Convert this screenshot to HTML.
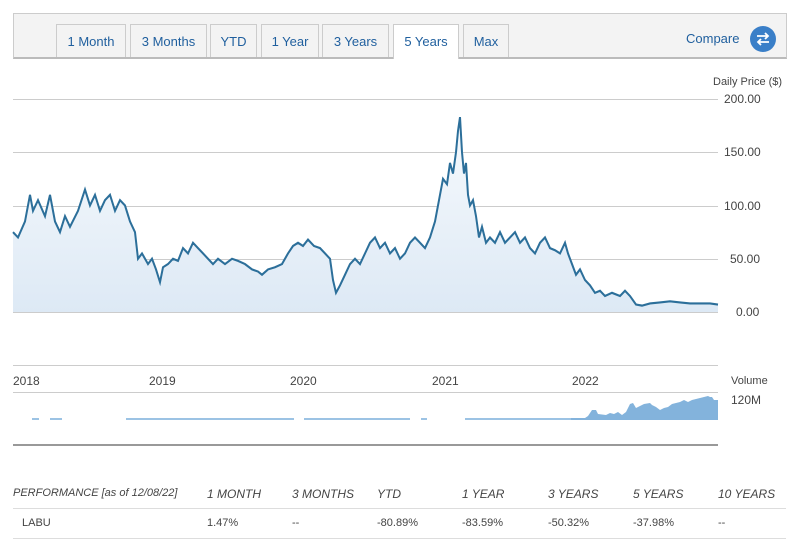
<!DOCTYPE html>
<html><head><style>
body{margin:0;width:800px;height:544px;background:#fff;font-family:"Liberation Sans",sans-serif;position:relative;overflow:hidden}
.bar{position:absolute;left:13px;top:13px;width:772px;height:43px;background:#f3f3f3;border:1px solid #ccc;border-bottom:2px solid #bbb}
.tab{position:absolute;top:24px;height:33px;border:1px solid #ccc;border-bottom:none;background:#f3f3f3;color:#1f5f9e;font-size:13px;line-height:34px;text-align:center;box-sizing:border-box}
.tab.on{background:#fff;height:35px;color:#1f5f9e}
.t{position:absolute;font-size:12px;color:#444}
.h{position:absolute;top:487px;font-size:12px;font-style:italic;color:#444}
.r{position:absolute;top:517px;font-size:11px;color:#444}
</style></head><body>
<div class="bar"></div>
<div class="tab" style="left:56px;width:70px">1 Month</div>
<div class="tab" style="left:130px;width:77px">3 Months</div>
<div class="tab" style="left:210px;width:47px">YTD</div>
<div class="tab" style="left:261px;width:58px">1 Year</div>
<div class="tab" style="left:322px;width:67px">3 Years</div>
<div class="tab on" style="left:393px;width:66px">5 Years</div>
<div class="tab" style="left:463px;width:46px">Max</div>
<div style="position:absolute;left:686px;top:31px;font-size:13px;color:#1f5f9e">Compare</div>
<svg style="position:absolute;left:750px;top:26px" width="26" height="26"><circle cx="13" cy="13" r="13" fill="#3a7fc8"/><path d="M7 10h11M15 7l3 3-3 3M19 16H8M11 13l-3 3 3 3" stroke="#fff" stroke-width="1.8" fill="none"/></svg>
<div class="t" style="left:713px;top:76px;font-size:11px">Daily Price ($)</div>
<div class="t" style="left:724px;top:92px">200.00</div>
<div class="t" style="left:724px;top:145px">150.00</div>
<div class="t" style="left:724px;top:199px">100.00</div>
<div class="t" style="left:730px;top:252px">50.00</div>
<div class="t" style="left:736px;top:305px">0.00</div>
<div class="t" style="left:13px;top:374px">2018</div>
<div class="t" style="left:149px;top:374px">2019</div>
<div class="t" style="left:290px;top:374px">2020</div>
<div class="t" style="left:432px;top:374px">2021</div>
<div class="t" style="left:572px;top:374px">2022</div>
<div class="t" style="left:731px;top:375px;font-size:11px">Volume</div>
<div class="t" style="left:731px;top:393px">120M</div>
<svg style="position:absolute;left:0;top:0" width="800" height="460">
<g stroke="#ccc" stroke-width="1">
<line x1="13" y1="99.5" x2="718" y2="99.5"/><line x1="13" y1="152.5" x2="718" y2="152.5"/><line x1="13" y1="206.5" x2="718" y2="206.5"/><line x1="13" y1="259.5" x2="718" y2="259.5"/><line x1="13" y1="312.5" x2="718" y2="312.5"/><line x1="13" y1="365.5" x2="718" y2="365.5"/><line x1="13" y1="392.5" x2="718" y2="392.5"/></g>
<line x1="13" y1="445" x2="718" y2="445" stroke="#999" stroke-width="2"/>
<defs><linearGradient id="g" x1="0" y1="1" x2="0" y2="0"><stop offset="0" stop-color="#f7fafd"/><stop offset="1" stop-color="#dde9f5"/></linearGradient></defs>
<g transform="translate(0,312) scale(1,-1.065)">
<path id="p" d="M13 75L18 70 25 85 30 110 33 95 38 105 45 90 50 110 55 85 60 75 65 90 70 80 78 95 85 115 90 100 95 110 100 95 105 105 110 110 115 95 120 105 125 100 130 85 135 75 138 50 142 55 148 45 152 50 156 40 160 28 163 42 168 45 173 50 178 48 183 60 188 55 193 65 198 60 203 55 208 50 213 45 218 50 225 45 232 50 238 48 245 45 252 40 258 38 262 35 268 40 275 42 282 45 288 55 293 62 298 65 303 62 308 68 314 62 320 60 325 55 330 50 333 30 336 18 340 25 345 35 350 45 355 50 360 45 365 55 370 65 375 70 380 60 385 65 390 55 395 60 400 50 405 55 410 65 415 70 420 65 425 60 430 70 435 85 440 110 443 125 447 120 450 140 453 130 456 150 458 170 460 183 462 150 464 130 466 140 468 110 470 100 473 105 476 90 479 70 482 80 486 65 490 70 495 65 500 75 505 65 510 70 515 75 520 65 525 70 530 60 535 55 540 65 545 70 550 60 555 58 560 55 565 65 568 55 572 45 576 35 580 40 585 30 590 25 595 18 600 20 605 15 612 18 620 15 625 20 630 15 636 7 642 6 650 8 660 9 670 10 680 9 690 8 700 8 710 8 718 7" fill="none"/>
<path d="M13 75L18 70 25 85 30 110 33 95 38 105 45 90 50 110 55 85 60 75 65 90 70 80 78 95 85 115 90 100 95 110 100 95 105 105 110 110 115 95 120 105 125 100 130 85 135 75 138 50 142 55 148 45 152 50 156 40 160 28 163 42 168 45 173 50 178 48 183 60 188 55 193 65 198 60 203 55 208 50 213 45 218 50 225 45 232 50 238 48 245 45 252 40 258 38 262 35 268 40 275 42 282 45 288 55 293 62 298 65 303 62 308 68 314 62 320 60 325 55 330 50 333 30 336 18 340 25 345 35 350 45 355 50 360 45 365 55 370 65 375 70 380 60 385 65 390 55 395 60 400 50 405 55 410 65 415 70 420 65 425 60 430 70 435 85 440 110 443 125 447 120 450 140 453 130 456 150 458 170 460 183 462 150 464 130 466 140 468 110 470 100 473 105 476 90 479 70 482 80 486 65 490 70 495 65 500 75 505 65 510 70 515 75 520 65 525 70 530 60 535 55 540 65 545 70 550 60 555 58 560 55 565 65 568 55 572 45 576 35 580 40 585 30 590 25 595 18 600 20 605 15 612 18 620 15 625 20 630 15 636 7 642 6 650 8 660 9 670 10 680 9 690 8 700 8 710 8 718 7L718 0 13 0Z" fill="url(#g)"/>
<use href="#p" stroke="#2c6f9a" stroke-width="2" vector-effect="non-scaling-stroke"/>
</g>
<g fill="#9cc3e4">
<rect x="32" y="418" width="7" height="2"/><rect x="50" y="418" width="12" height="2"/><rect x="126" y="418" width="168" height="2"/><rect x="304" y="418" width="106" height="2"/><rect x="421" y="418" width="6" height="2"/><rect x="465" y="418" width="106" height="2"/>
</g>
<path d="M571 420V418H585L588 416 592 410 596 410 598 414 606 415 610 413 614 414 618 412 622 415 626 412 630 404 633 403 636 408 640 406 644 404 650 403 652 405 656 407 660 410 664 408 668 407 672 404 676 403 680 402 684 400 688 402 692 400 696 399 700 398 704 397 708 396 710 397 712 397 714 400 718 400V420Z" fill="#83b3dc"/>
</svg>
<div class="h" style="left:13px;font-size:11px">PERFORMANCE [as of 12/08/22]</div>
<div class="h" style="left:207px">1 MONTH</div>
<div class="h" style="left:292px">3 MONTHS</div>
<div class="h" style="left:377px">YTD</div>
<div class="h" style="left:462px">1 YEAR</div>
<div class="h" style="left:548px">3 YEARS</div>
<div class="h" style="left:633px">5 YEARS</div>
<div class="h" style="left:718px">10 YEARS</div>
<div style="position:absolute;left:13px;top:508px;width:773px;height:1px;background:#ddd"></div>
<div class="r" style="left:22px">LABU</div>
<div class="r" style="left:207px">1.47%</div>
<div class="r" style="left:292px">--</div>
<div class="r" style="left:377px">-80.89%</div>
<div class="r" style="left:462px">-83.59%</div>
<div class="r" style="left:548px">-50.32%</div>
<div class="r" style="left:633px">-37.98%</div>
<div class="r" style="left:718px">--</div>
<div style="position:absolute;left:13px;top:538px;width:773px;height:1px;background:#ddd"></div>
</body></html>
